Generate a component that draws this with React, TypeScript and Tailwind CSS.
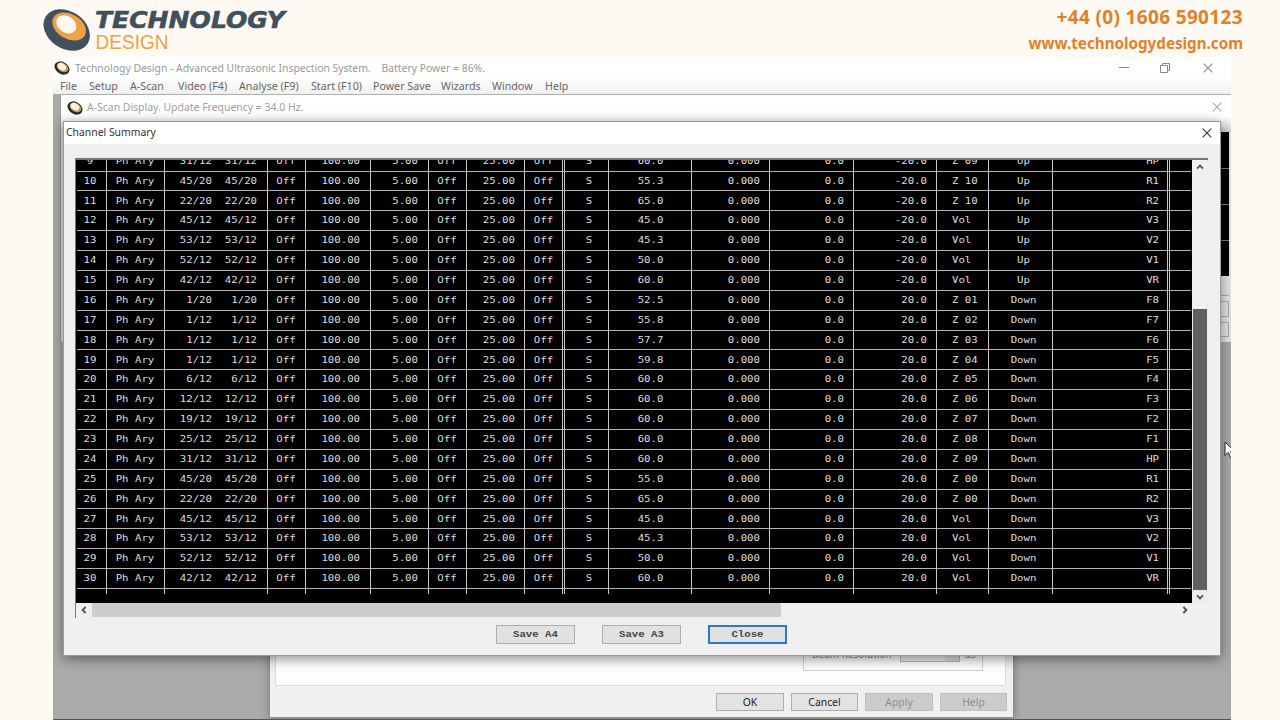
import type { ReactNode } from "react";
import clsx from "clsx";

type Row = [string, string, string, string, string, string];

// channel, element/count, angle, zone, skew, label
const rows: Row[] = [
  ["9", "31/12", "60.0", "Z 09", "Up", "HP"],
  ["10", "45/20", "55.3", "Z 10", "Up", "R1"],
  ["11", "22/20", "65.0", "Z 10", "Up", "R2"],
  ["12", "45/12", "45.0", "Vol", "Up", "V3"],
  ["13", "53/12", "45.3", "Vol", "Up", "V2"],
  ["14", "52/12", "50.0", "Vol", "Up", "V1"],
  ["15", "42/12", "60.0", "Vol", "Up", "VR"],
  ["16", "1/20", "52.5", "Z 01", "Down", "F8"],
  ["17", "1/12", "55.8", "Z 02", "Down", "F7"],
  ["18", "1/12", "57.7", "Z 03", "Down", "F6"],
  ["19", "1/12", "59.8", "Z 04", "Down", "F5"],
  ["20", "6/12", "60.0", "Z 05", "Down", "F4"],
  ["21", "12/12", "60.0", "Z 06", "Down", "F3"],
  ["22", "19/12", "60.0", "Z 07", "Down", "F2"],
  ["23", "25/12", "60.0", "Z 08", "Down", "F1"],
  ["24", "31/12", "60.0", "Z 09", "Down", "HP"],
  ["25", "45/20", "55.0", "Z 00", "Down", "R1"],
  ["26", "22/20", "65.0", "Z 00", "Down", "R2"],
  ["27", "45/12", "45.0", "Vol", "Down", "V3"],
  ["28", "53/12", "45.3", "Vol", "Down", "V2"],
  ["29", "52/12", "50.0", "Vol", "Down", "V1"],
  ["30", "42/12", "60.0", "Vol", "Down", "VR"],
];

const columns = [
  "w-[30px] border-r justify-center pr-[3px]",
  "w-[58px] border-r justify-center pr-[1px]",
  "w-[103px] border-r justify-end pr-[10px]",
  "w-[38px] border-r justify-center pr-[1px]",
  "w-[65px] border-r justify-end pr-[10px]",
  "w-[58px] border-r justify-end pr-[10px]",
  "w-[38px] border-r justify-center pr-[1px]",
  "w-[58px] border-r justify-end pr-[9px]",
  "w-[40px] border-r-3 border-double justify-center",
  "w-[44px] border-r justify-center pl-[5px]",
  "w-[83px] border-r justify-center pl-[1px]",
  "w-[78px] border-r justify-end pr-[9px]",
  "w-[84px] border-r justify-end pr-[9px]",
  "w-[83px] border-r justify-end pr-[9px]",
  "w-[52px] border-r justify-start pl-[15px]",
  "w-[64px] border-r justify-center pl-[6px]",
  "w-[117px] border-r-3 border-double justify-end pr-[8px]",
  "w-[21px]",
];

const menu = [
  ["File", "w-[29px]"],
  ["Setup", "w-[41px]"],
  ["A-Scan", "w-[48px]"],
  ["Video (F4)", "w-[61px]"],
  ["Analyse (F9)", "w-[72px]"],
  ["Start (F10)", "w-[62px]"],
  ["Power Save", "w-[68px]"],
  ["Wizards", "w-[51px]"],
  ["Window", "w-[53px]"],
  ["Help", "w-[30px]"],
];

function GridRow({ row }: { row: Row }) {
  const [no, elements, angle, zone, skew, label] = row;
  const up = skew === "Up";
  const cells = [
    no,
    "Ph Ary",
    elements.padStart(5) + "  " + elements.padStart(5),
    "Off",
    "100.00",
    "5.00",
    "Off",
    "25.00",
    "Off",
    "S",
    angle,
    "0.000",
    "0.0",
    up ? "-20.0" : "20.0",
    zone,
    skew,
    label,
    "",
  ];
  return (
    <div className="flex h-[19.88px] shrink-0 border-b border-[#b4b4b4]">
      {cells.map((cell, i) => (
        <div
          key={i}
          className={clsx("flex shrink-0 items-center border-[#c9c3cd]", columns[i])}
        >
          <span className="scale-y-[.86] whitespace-pre">{cell}</span>
        </div>
      ))}
    </div>
  );
}

function Orb({ className }: { className: string }) {
  return (
    <svg viewBox="0 0 48 43" className={className}>
      <ellipse cx="23.7" cy="21" rx="25" ry="18.6" transform="rotate(34 23.7 21)" fill="#40505c" />
      <ellipse cx="26.2" cy="17.5" rx="18" ry="12.3" transform="rotate(30 26.2 17.5)" fill="#eea146" />
      <ellipse cx="23.3" cy="15.3" rx="10.8" ry="8.2" transform="rotate(35 23.3 15.3)" fill="#fff9f3" />
    </svg>
  );
}

function SmallOrb() {
  return (
    <svg viewBox="0 0 16 14" className="h-[14px] w-[16px] shrink-0">
      <ellipse cx="8" cy="7" rx="8" ry="6" transform="rotate(32 8 7)" fill="#2c2722" />
      <ellipse cx="8.5" cy="6.4" rx="6.2" ry="4.3" transform="rotate(32 8.5 6.4)" fill="#c09763" />
      <ellipse cx="8" cy="5.8" rx="4.6" ry="3.3" transform="rotate(32 8 5.8)" fill="#fff2dc" />
    </svg>
  );
}

function Cross({ className }: { className: string }) {
  return (
    <svg viewBox="0 0 10 10" className={clsx("size-[10px]", className)}>
      <path d="M.7.7l8.6 8.6M9.3.7L.7 9.3" fill="none" stroke="currentColor" strokeWidth="1.1" />
    </svg>
  );
}

function Chevron({ className }: { className?: string }) {
  return (
    <svg viewBox="0 0 8 8" className={clsx("size-[8px] text-[#505050]", className)}>
      <path d="M1 5.6L4 2.6l3 3" fill="none" stroke="currentColor" strokeWidth="1.8" />
    </svg>
  );
}

function Button({ children, className }: { children: ReactNode; className: string }) {
  return (
    <button className={clsx("flex items-center justify-center border", className)}>
      {children}
    </button>
  );
}

function Header() {
  return (
    <header className="flex h-[58px] justify-between pl-[43px] pr-[37px]">
      <div className="flex pt-[9px]">
        <Orb className="h-[43px] w-[48px]" />
        <svg viewBox="0 0 200 45" className="ml-[3px] h-[45px] w-[200px] overflow-visible">
          <text
            x="1"
            y="19.3"
            textLength="190"
            lengthAdjust="spacingAndGlyphs"
            strokeWidth="0.6"
            className="fill-[#40505c] stroke-[#40505c] font-['DejaVu_Sans'] text-[23.5px] font-bold italic"
          >
            TECHNOLOGY
          </text>
          <text
            x="1.5"
            y="40"
            textLength="73"
            lengthAdjust="spacingAndGlyphs"
            className="fill-[#eea146] font-['Liberation_Sans'] text-[20px]"
          >
            DESIGN
          </text>
        </svg>
      </div>
      <div className="flex flex-col items-end pt-[4px] font-['Noto_Sans',sans-serif] font-bold text-[#e0812a]">
        <span className="text-[19px] leading-[26px] tracking-[0.35px]">+44 (0) 1606 590123</span>
        <span className="text-[15.2px] leading-[27px]">www.technologydesign.com</span>
      </div>
    </header>
  );
}

function ChannelSummary() {
  return (
    <section className="absolute left-[10px] top-[64px] flex h-[535px] w-[1158px] flex-col border border-[#9a9a9a] bg-[#f0f0f0] shadow-[0_3px_12px_rgba(0,0,0,0.45)]">
      <div className="flex h-[22px] shrink-0 items-center justify-between bg-white pl-[2px] pr-[8px]">
        <span className="text-[10.4px] text-[#303030]">Channel Summary</span>
        <Cross className="text-[#333]" />
      </div>
      <div className="ml-[11px] mt-[14px] flex h-[460px] w-[1133px] shrink-0 flex-col border-l border-t-2 border-[#777]">
        <div className="flex h-[443px] shrink-0">
          <div className="flex w-[1116px] flex-col overflow-hidden bg-black pl-[1px] font-['DejaVu_Sans_Mono',monospace] text-[10.7px] leading-none text-[#dedede]">
            <div className="mt-[-8.3px] flex w-[1114px] flex-col">
              {rows.map((row) => (
                <GridRow key={row[0]} row={row} />
              ))}
              <div className="flex h-[5px]">
                {columns.map((column, i) => (
                  <div key={i} className={clsx("shrink-0 border-[#c9c3cd]", column)} />
                ))}
              </div>
            </div>
          </div>
          <div className="flex w-[16px] flex-col items-center bg-[#ececec] pr-[1px]">
            <div className="flex h-[149px] w-full shrink-0 justify-center bg-[#f0f0f0] pt-[3px]">
              <Chevron />
            </div>
            <div className="h-[281px] w-[14px] shrink-0 bg-[#606060]" />
            <Chevron className="mt-[3px] shrink-0 rotate-180" />
          </div>
        </div>
        <div className="flex h-[14px] w-[1117px] items-center justify-between bg-[#f0f0f0] pl-[4px] pr-[4px]">
          <Chevron className="-rotate-90" />
          <div className="ml-[4px] mr-auto h-[14px] w-[689px] bg-[#cdcdcd]" />
          <Chevron className="rotate-90" />
        </div>
      </div>
      <div className="mt-[7px] flex gap-[27px] pl-[432px] font-['Liberation_Mono',monospace] text-[10.7px] font-bold text-[#444]">
        <Button className="h-[19px] w-[79px] border-[#adadad] bg-[#e1e1e1]">
          <span className="scale-y-[.88]">Save A4</span>
        </Button>
        <Button className="h-[19px] w-[79px] border-[#adadad] bg-[#e1e1e1]">
          <span className="scale-y-[.88]">Save A3</span>
        </Button>
        <Button className="h-[19px] w-[79px] border-2 border-[#2a78c8] bg-[#e1e1e1]">
          <span className="scale-y-[.88]">Close</span>
        </Button>
      </div>
    </section>
  );
}

function SettingsDialog() {
  return (
    <section className="absolute left-[216px] top-[560px] flex h-[101px] w-[745px] flex-col border border-[#8c8c8c] bg-[#f0f0f0] shadow-[0_0_8px_rgba(0,0,0,0.3)]">
      <div className="ml-[5px] h-[68px] w-[731px] shrink-0 border border-t-0 border-[#dcdcdc] bg-white">
        <div className="ml-[527px] flex h-[53px] w-[180px] items-end gap-[8px] border border-t-0 border-[#d0d0d0] pb-[8px] pl-[8px] text-[10px] text-[#888]">
          <span className="pb-[2px] leading-[12px]">Beam Resolution</span>
          <span className="flex h-[14px] w-[60px] justify-end border border-[#bbb] bg-[#eee]">
            <span className="w-[14px] bg-[#ddd]" />
          </span>
          <span className="-ml-[3px] pb-[2px] leading-[12px]">us</span>
        </div>
      </div>
      <div className="mt-[7px] flex gap-[7px] pl-[446px] font-['Noto_Sans',sans-serif] text-[10.4px] text-[#222]">
        <Button className="h-[18px] w-[68px] border-[#adadad] bg-[#e3e3e3] pt-[2px]">OK</Button>
        <Button className="h-[18px] w-[67px] border-[#adadad] bg-[#e3e3e3] pt-[2px]">Cancel</Button>
        <Button className="h-[18px] w-[68px] border-[#bfbfbf] bg-[#cccccc] pt-[2px] text-[#8c8c8c]">Apply</Button>
        <Button className="h-[18px] w-[67px] border-[#bfbfbf] bg-[#cccccc] pt-[2px] text-[#8c8c8c]">Help</Button>
      </div>
    </section>
  );
}

export default function App() {
  return (
    <div className="h-[720px] w-[1280px] overflow-hidden bg-[#fff9f3] font-['Noto_Sans',sans-serif]">
      <Header />
      <main className="relative ml-[53px] -mt-[1px] flex h-[663px] w-[1178px] flex-col overflow-hidden border-b border-[#555] bg-[#aaaaaa]">
        <div className="flex h-[20px] shrink-0 items-center bg-white pl-[1px] pt-[2px]">
          <SmallOrb />
          <span className="ml-[5px] whitespace-pre pt-[2px] text-[10.4px] text-[#989898]">
            Technology Design - Advanced Ultrasonic Inspection System.    Battery Power = 86%.
          </span>
          <div className="-mt-px ml-auto mr-[18px] flex items-center text-[#888]">
            <span className="h-px w-[10px] bg-[#888]" />
            <svg viewBox="0 0 10 10" className="ml-[31px] size-[10px]" fill="none" stroke="currentColor">
              <path d="M.5 2.5h7v7h-7zM2.5 2.5v-2h7v7h-2" />
            </svg>
            <Cross className="ml-[33px] text-[#888]" />
          </div>
        </div>
        <nav className="flex h-[18px] shrink-0 items-center border-b border-[#b0b0b0] bg-gradient-to-b from-white to-[#f0f0f0] pl-[7px] pt-[1.5px] text-[10.7px] text-[#666]">
          {menu.map(([label, width]) => (
            <span key={label} className={clsx("whitespace-nowrap", width)}>
              {label}
            </span>
          ))}
        </nav>
        <section className="ml-[7px] h-[247px] shrink-0 border-l border-[#999] bg-[#e4e4e4]">
          <div className="flex h-[37px] items-start justify-between bg-gradient-to-b from-white from-60% to-[#cfcfcf] pl-[6px] pr-[9px] pt-[5px]">
            <div className="flex items-center">
              <SmallOrb />
              <span className="ml-[4px] text-[10.45px] leading-[15px] text-[#a0a0a0]">
                A-Scan Display. Update Frequency = 34.0 Hz.
              </span>
            </div>
            <Cross className="mt-[2px] text-[#aaa]" />
          </div>
          <div className="ml-[3px] mr-[2px] flex h-[144px] flex-col bg-black pt-[36px]">
            <div className="h-[36px] border-t border-[#777]" />
            <div className="h-[36px] border-t border-[#777]" />
            <div className="h-[36px] border-t border-[#777]" />
          </div>
          <div className="flex flex-col items-end gap-[5px] pr-[2px] pt-[19px]">
            <div className="h-px w-[12px] bg-[#aaa]" />
            <div className="h-[16px] w-[12px] border border-[#aaa]" />
            <div className="h-[15px] w-[12px] border border-[#aaa]" />
          </div>
        </section>
        <SettingsDialog />
        <ChannelSummary />
        <svg viewBox="0 0 12 18" className="absolute left-[1171px] top-[384px] h-[18px] w-[12px]">
          <path d="M1 1v13.5l3.3-3.1 2.2 5.2 2.3-1-2.2-5h4.4z" fill="#fff" stroke="#222" />
        </svg>
      </main>
    </div>
  );
}
